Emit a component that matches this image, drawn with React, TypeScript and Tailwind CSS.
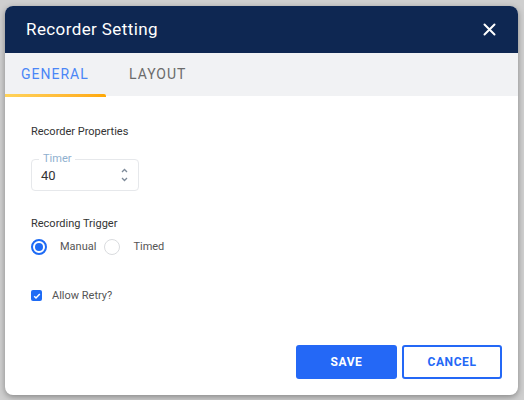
import { useState } from "react";

export default function App() {
  const [tab, setTab] = useState("general");
  const [trigger, setTrigger] = useState("manual");
  const [retry, setRetry] = useState(true);
  const [timer, setTimer] = useState(40);

  return (
    <div className="w-[524px] h-[400px] bg-[#cfcfcf] pt-[6px] pl-[5px] font-['Roboto',sans-serif]">
      <div className="w-[513px] h-[389px] bg-white rounded-[8px] overflow-hidden shadow-[0_2px_6px_rgba(0,0,0,0.35)] flex flex-col">
        {/* Header */}
        <div className="h-[47px] bg-[#0e2752] flex items-center justify-between pl-[21px] pr-[22px] shrink-0">
          <h1 className="text-white text-[17px] leading-none tracking-[0.4px]">Recorder Setting</h1>
          <button className="text-white">
            <svg width="13" height="13" viewBox="0 0 13 13" fill="none" stroke="currentColor" strokeWidth="2" strokeLinecap="round">
              <path d="M1.5 1.5l10 10M11.5 1.5l-10 10" />
            </svg>
          </button>
        </div>

        {/* Tabs */}
        <div className="h-[43px] bg-[#f1f2f4] flex items-stretch shrink-0">
          <button
            onClick={() => setTab("general")}
            className={`relative w-[101px] pl-[16px] text-left text-[14px] tracking-[1px] ${tab === "general" ? "text-[#4a86f7]" : "text-[#6b6b6b]"}`}
          >
            GENERAL
            {tab === "general" && (
              <span className="absolute left-0 right-0 bottom-[-1px] h-[3px] rounded-tr-[2px] bg-gradient-to-r from-[#ffd35a] to-[#ffa800]" />
            )}
          </button>
          <button
            onClick={() => setTab("layout")}
            className={`pl-[23px] text-left text-[14px] tracking-[1px] ${tab === "layout" ? "text-[#4a86f7]" : "text-[#6b6b6b]"}`}
          >
            LAYOUT
          </button>
        </div>

        {/* Body */}
        <div className="flex-1 flex flex-col px-[26px] pt-[29px] text-[#333]">
          <p className="text-[11px] leading-[14px]">Recorder Properties</p>

          <div className="relative mt-[20px] w-[108px] h-[32px] border border-[#e6e8eb] rounded-[4px] flex items-center justify-between pl-[9px] pr-[10px]">
            <span className="absolute -top-[8px] left-[7px] bg-white px-[4px] text-[11px] leading-[14px] text-[#8fb0cf]">Timer</span>
            <span className="text-[13px] text-[#333] mt-[2px]">{timer}</span>
            <div className="flex flex-col items-center gap-[4px] text-[#7d8a99]">
              <button onClick={() => setTimer(timer + 1)}>
                <svg width="7" height="5" viewBox="0 0 7 5" fill="none" stroke="currentColor" strokeWidth="1.3">
                  <path d="M1 4l2.5-2.5L6 4" />
                </svg>
              </button>
              <button onClick={() => setTimer(timer - 1)}>
                <svg width="7" height="5" viewBox="0 0 7 5" fill="none" stroke="currentColor" strokeWidth="1.3">
                  <path d="M1 1l2.5 2.5L6 1" />
                </svg>
              </button>
            </div>
          </div>

          <p className="mt-[26px] text-[11px] leading-[14px]">Recording Trigger</p>
          <div className="mt-[8px] flex items-center text-[11px] text-[#555]">
            {[
              { id: "manual", label: "Manual" },
              { id: "timed", label: "Timed" },
            ].map((o) => (
              <button key={o.id} onClick={() => setTrigger(o.id)} className="flex items-center mr-[8px]">
                <span
                  className={`w-[16px] h-[16px] rounded-full flex items-center justify-center ${trigger === o.id ? "border-2 border-[#1e6bf5]" : "border border-[#d9dbde]"}`}
                >
                  {trigger === o.id && <span className="w-[8px] h-[8px] rounded-full bg-[#1e6bf5]" />}
                </span>
                <span className="ml-[13px]">{o.label}</span>
              </button>
            ))}
          </div>

          <button onClick={() => setRetry(!retry)} className="mt-[32px] flex items-center text-[11px] text-[#555]">
            <span
              className={`w-[11px] h-[11px] rounded-[2px] flex items-center justify-center ${retry ? "bg-[#1e6bf5]" : "border border-[#bbb]"}`}
            >
              {retry && (
                <svg width="8" height="8" viewBox="0 0 8 8" fill="none" stroke="white" strokeWidth="1.5">
                  <path d="M1.2 4.2l1.8 1.8 3.8-4" />
                </svg>
              )}
            </span>
            <span className="ml-[10px]">Allow Retry?</span>
          </button>

          <div className="mt-auto mb-[16px] flex justify-end gap-[5px] mr-[-10px]">
            <button className="w-[101px] h-[34px] rounded-[3px] bg-[#2468f6] text-white text-[12px] font-bold tracking-[0.6px]">
              SAVE
            </button>
            <button className="w-[100px] h-[34px] rounded-[3px] border-2 border-[#2468f6] bg-white text-[#2468f6] text-[12px] font-bold tracking-[0.6px]">
              CANCEL
            </button>
          </div>
        </div>
      </div>
    </div>
  );
}
